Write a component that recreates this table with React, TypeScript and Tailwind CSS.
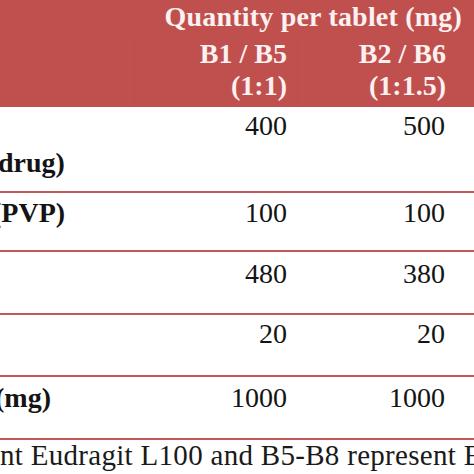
import React from 'react';

type Row = {
  label: React.ReactNode;
  a: string;
  b: string;
  h: string;
  pt: string;
};

const rows: Row[] = [
  {
    label: (
      <>
        <span className="block">&nbsp;</span>
        <span className="block -ml-[2px]">drug)</span>
      </>
    ),
    a: '400',
    b: '500',
    h: 'h-[84px]',
    pt: 'pt-0',
  },
  { label: <span className="block -ml-[8px]">(PVP)</span>, a: '100', b: '100', h: 'h-[59px]', pt: 'pt-[1px]' },
  { label: <span className="block">&nbsp;</span>, a: '480', b: '380', h: 'h-[63px]', pt: 'pt-[3px]' },
  { label: <span className="block">&nbsp;</span>, a: '20', b: '20', h: 'h-[62px]', pt: 'pt-0' },
  { label: <span className="block -ml-[5px]">(mg)</span>, a: '1000', b: '1000', h: 'h-[63px]', pt: 'pt-[2px]' },
];

const App = () => {
  return (
    <div className="w-[474px] h-[474px] overflow-hidden bg-white [font-family:'Liberation_Serif','Times_New_Roman',serif] text-[28px]">
      {/* header */}
      <div className="h-[107px] bg-[#c0504d] text-[#fbf1f1] font-bold">
        <div className="leading-[34px] h-[38px] text-right pr-[12px] whitespace-nowrap tracking-[0.2px]">
          Quantity per tablet (mg)
        </div>
        <div className="grid grid-cols-[130px_173px_171px] h-[69px]">
          <div className="border-r border-[#c25552]" />
          <div className="border-r border-[#c25552] text-right pr-[15px] leading-[32px]">
            <div>B1 / B5</div>
            <div>(1:1)</div>
          </div>
          <div className="text-right pr-[28px] leading-[32px] whitespace-nowrap">
            <div>B2 / B6</div>
            <div>(1:1.5)</div>
          </div>
        </div>
      </div>

      {/* body rows */}
      {rows.map((r, i) => (
        <div
          key={i}
          className={`grid grid-cols-[178px_125px_171px] ${r.h} ${r.pt} ${i > 0 ? 'border-t-2 border-[#c25855]' : ''} leading-[37px] text-[#141414]`}
        >
          <div className="font-bold whitespace-nowrap overflow-hidden">{r.label}</div>
          <div className="text-right pr-[16px]">{r.a}</div>
          <div className="text-right pr-[29px]">{r.b}</div>
        </div>
      ))}

      {/* footnote */}
      <div className="border-t-2 border-[#c25855] leading-[31px] text-[29px] tracking-[0.3px] text-[#1a1a1a] whitespace-nowrap">
        nt Eudragit L100 and B5-B8 represent E
      </div>
    </div>
  );
};

export default App;
